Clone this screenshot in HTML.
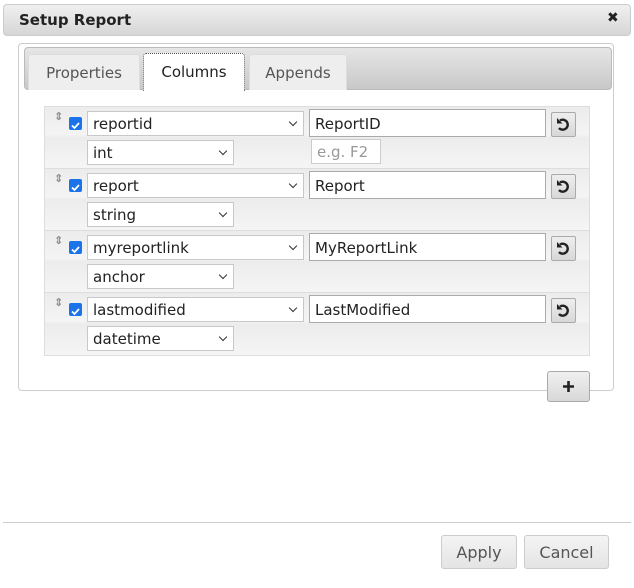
<!DOCTYPE html><html><head><style>
*{box-sizing:border-box}
body{margin:0;width:634px;height:588px;background:#fff;font-family:"DejaVu Sans","Liberation Sans",sans-serif;position:relative;overflow:hidden}
.a{position:absolute}
.hdr{left:3px;top:4px;width:628px;height:32px;border:1px solid #ccc;border-radius:4px;background:linear-gradient(#f0f0f0,#d6d6d6)}
.ttl{left:19px;top:11px;font-weight:bold;font-size:15px;color:#222}
.x{left:607px;top:10px;font-weight:bold;font-size:14px;color:#222}
.panel{left:18px;top:43px;width:596px;height:348px;border:1px solid #ccc;border-radius:4px}
.tabbar{left:24px;top:47px;width:588px;height:43px;border:1px solid #bbb;border-radius:4px;background:linear-gradient(#e6e6e6,#c8c8c8)}
.tab{height:36px;top:54px;background:#eee;border:1px solid #ddd;border-bottom:none;font-size:15px;color:#555;text-align:center;line-height:37px;border-radius:3px 3px 0 0}
.tab.on{background:#fff;border:1px dotted #555;border-bottom:none;color:#222;top:53px;height:38px}
.tbl{left:44px;top:106px;width:546px;height:250px;border:1px solid #ddd}
.row{left:45px;width:544px;height:62px;background:linear-gradient(#ececec,#f4f4f4 45%,#ececec 50%,#f5f5f5);border-bottom:1px solid #ddd}
.sel{height:25px;border:1px solid #c8c8c8;background:#fff;font-size:15px;color:#222;padding:3px 5px;line-height:19px}
.sel:after{content:"";position:absolute;right:7px;top:7px;width:5px;height:5px;border-right:1.6px solid #333;border-bottom:1.6px solid #333;transform:rotate(45deg)}
.inp{height:28px;border:1px solid #aaa;background:#fff;font-size:15px;color:#222;padding:5px 5px;line-height:18px}
.rb{width:25px;height:25px;border:1px solid #aaa;border-radius:2px;background:linear-gradient(#eee,#d8d8d8)}
.cb{width:13px;height:13px;background:#1a73e8;border-radius:2px}
.drag{font-size:11px;color:#888;line-height:11px;font-weight:bold}
.btn{border:1px solid #ccc;border-radius:3px;background:linear-gradient(#f4f4f4,#e4e4e4);font-size:16px;color:#555;text-align:center}
</style></head><body>
<div class="a hdr"></div><div class="a ttl">Setup Report</div><div class="a x">✖</div>
<div class="a panel"></div>
<div class="a tabbar"></div>
<div class="a tab" style="left:28px;width:112px">Properties</div>
<div class="a tab on" style="left:143px;width:102px">Columns</div>
<div class="a tab" style="left:249px;width:98px">Appends</div>
<div class="a tbl"></div>

<div class="a row" style="top:107px"></div>
<div class="a row" style="top:169px"></div>
<div class="a row" style="top:231px"></div>
<div class="a row" style="top:293px;height:62px;border-bottom:none"></div>

<div class="a drag" style="left:54px;top:111px">⇕</div>
<div class="a cb" style="left:69px;top:117px"><svg width="13" height="13"><path d="M3 6.5l2.5 2.5 4.5-5" stroke="#fff" stroke-width="1.8" fill="none"/></svg></div>
<div class="a sel" style="left:87px;top:111px;width:217px">reportid</div>
<div class="a inp" style="left:309px;top:109px;width:237px">ReportID</div>
<div class="a rb" style="left:551px;top:112px"><svg width="23" height="23"><path d="M8 7.5A5 5 0 1 1 7 15" stroke="#222" stroke-width="2.4" fill="none"/><path d="M5 5v5.5h5.5z" fill="#222"/></svg></div>
<div class="a sel" style="left:87px;top:140px;width:147px">int</div>
<div class="a inp" style="left:311px;top:139px;width:70px;height:25px;color:#999;padding-top:3px;border-color:#ccc">e.g. F2</div>

<div class="a drag" style="left:54px;top:173px">⇕</div>
<div class="a cb" style="left:69px;top:179px"><svg width="13" height="13"><path d="M3 6.5l2.5 2.5 4.5-5" stroke="#fff" stroke-width="1.8" fill="none"/></svg></div>
<div class="a sel" style="left:87px;top:173px;width:217px">report</div>
<div class="a inp" style="left:309px;top:171px;width:237px">Report</div>
<div class="a rb" style="left:551px;top:174px"><svg width="23" height="23"><path d="M8 7.5A5 5 0 1 1 7 15" stroke="#222" stroke-width="2.4" fill="none"/><path d="M5 5v5.5h5.5z" fill="#222"/></svg></div>
<div class="a sel" style="left:87px;top:202px;width:147px">string</div>

<div class="a drag" style="left:54px;top:235px">⇕</div>
<div class="a cb" style="left:69px;top:241px"><svg width="13" height="13"><path d="M3 6.5l2.5 2.5 4.5-5" stroke="#fff" stroke-width="1.8" fill="none"/></svg></div>
<div class="a sel" style="left:87px;top:235px;width:217px">myreportlink</div>
<div class="a inp" style="left:309px;top:233px;width:237px">MyReportLink</div>
<div class="a rb" style="left:551px;top:236px"><svg width="23" height="23"><path d="M8 7.5A5 5 0 1 1 7 15" stroke="#222" stroke-width="2.4" fill="none"/><path d="M5 5v5.5h5.5z" fill="#222"/></svg></div>
<div class="a sel" style="left:87px;top:264px;width:147px">anchor</div>

<div class="a drag" style="left:54px;top:297px">⇕</div>
<div class="a cb" style="left:69px;top:303px"><svg width="13" height="13"><path d="M3 6.5l2.5 2.5 4.5-5" stroke="#fff" stroke-width="1.8" fill="none"/></svg></div>
<div class="a sel" style="left:87px;top:297px;width:217px">lastmodified</div>
<div class="a inp" style="left:309px;top:295px;width:237px">LastModified</div>
<div class="a rb" style="left:551px;top:298px"><svg width="23" height="23"><path d="M8 7.5A5 5 0 1 1 7 15" stroke="#222" stroke-width="2.4" fill="none"/><path d="M5 5v5.5h5.5z" fill="#222"/></svg></div>
<div class="a sel" style="left:87px;top:326px;width:147px">datetime</div>

<div class="a btn" style="left:547px;top:371px;width:43px;height:31px;border-color:#aaa;background:linear-gradient(#f0f0f0,#d8d8d8)"><svg width="41" height="29"><path d="M20.5 9v11M15 14.5h11" stroke="#222" stroke-width="2.6"/></svg></div>

<div class="a" style="left:3px;top:522px;width:628px;height:1px;background:#ccc"></div>
<div class="a btn" style="left:441px;top:535px;width:76px;height:34px;line-height:34px">Apply</div>
<div class="a btn" style="left:524px;top:535px;width:85px;height:34px;line-height:34px">Cancel</div>
</body></html>
